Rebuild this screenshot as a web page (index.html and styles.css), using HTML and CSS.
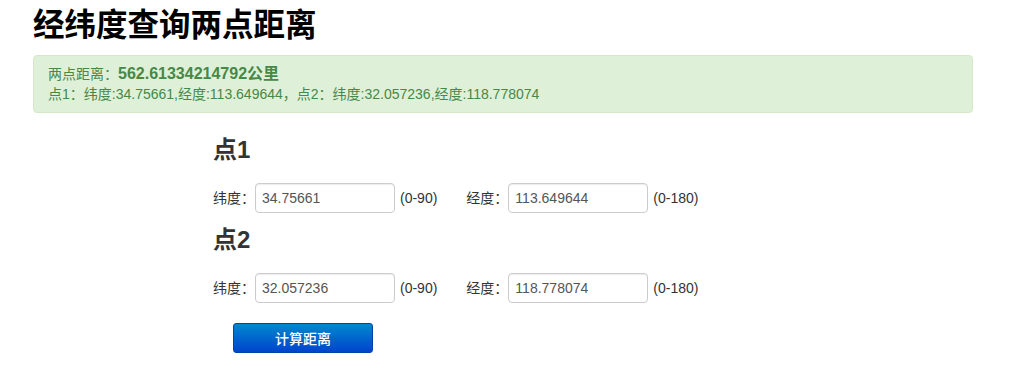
FILE: index.html
```html
<!DOCTYPE html>
<html lang="zh-CN">
<head>
<meta charset="utf-8">
<title>经纬度查询两点距离</title>
<link rel="stylesheet" href="styles.css">
</head>
<body>
<div class="container">
  <h1 class="title">经纬度查询两点距离</h1>
  <div class="alert">
    <div class="alert-line">两点距离：<strong class="dist">562.61334214792公里</strong></div>
    <div class="alert-line">点1：纬度:34.75661,经度:113.649644，点2：纬度:32.057236,经度:118.778074</div>
  </div>
  <form class="form">
    <h3 class="point">点1</h3>
    <div class="row">
      <label class="lbl">纬度：</label>
      <input class="inp" type="text" value="34.75661">
      <span class="hint">(0-90)</span>
      <label class="lbl lbl-lng">经度：</label>
      <input class="inp" type="text" value="113.649644">
      <span class="hint">(0-180)</span>
    </div>
    <h3 class="point">点2</h3>
    <div class="row">
      <label class="lbl">纬度：</label>
      <input class="inp" type="text" value="32.057236">
      <span class="hint">(0-90)</span>
      <label class="lbl lbl-lng">经度：</label>
      <input class="inp" type="text" value="118.778074">
      <span class="hint">(0-180)</span>
    </div>
    <div class="actions">
      <button class="btn" type="button">计算距离</button>
    </div>
  </form>
</div>
</body>
</html>
```
FILE: styles.css
```css
html, body {
  margin: 0;
  padding: 0;
  background: #fff;
}
body {
  font-family: "Liberation Sans", Arial, "Noto Sans CJK SC", sans-serif;
  font-size: 14px;
  line-height: 20px;
  color: #333;
}
.container {
  width: 940px;
  margin-left: 33px;
}
.title {
  margin: 5px 0 10px 0;
  font-size: 31.5px;
  line-height: 40px;
  font-weight: bold;
  color: #000;
}
.alert {
  background: #dff0d8;
  border: 1px solid #d6e9c6;
  border-radius: 4px;
  color: #468847;
  padding: 8px 14px 8px 14px;
}
.alert-line {
  line-height: 20px;
  font-size: 14px;
}
.dist {
  font-size: 16px;
  font-weight: bold;
}
.form {
  margin: 22px 0 0 180px;
}
.point {
  margin: 0;
  font-size: 24px;
  line-height: 30px;
  font-weight: bold;
  color: #333;
}
.row {
  display: flex;
  align-items: center;
  margin: 18px 0 12px 0;
}
.lbl {
  width: 42px;
  font-size: 14px;
  color: #333;
}
.lbl-lng {
  margin-left: 29px;
}
.inp {
  box-sizing: border-box;
  width: 140px;
  height: 30px;
  padding: 4px 6px;
  border: 1px solid #ccc;
  border-radius: 4px;
  font-family: "Liberation Sans", Arial, sans-serif;
  font-size: 14px;
  color: #555;
  box-shadow: inset 0 1px 1px rgba(0,0,0,0.075);
  margin: 0;
}
.hint {
  margin-left: 5px;
  font-size: 14px;
  color: #333;
}
.actions {
  padding-left: 20px;
  margin-top: 20px;
}
.btn {
  width: 140px;
  height: 30px;
  border: 1px solid #0044aa;
  border-radius: 3px;
  background: linear-gradient(to bottom, #0088cc, #0044cc);
  color: #fff;
  font-family: "Liberation Sans", Arial, "Noto Sans CJK SC", sans-serif;
  font-size: 14px;
  font-weight: 500;
  padding: 0;
  cursor: pointer;
}
```
